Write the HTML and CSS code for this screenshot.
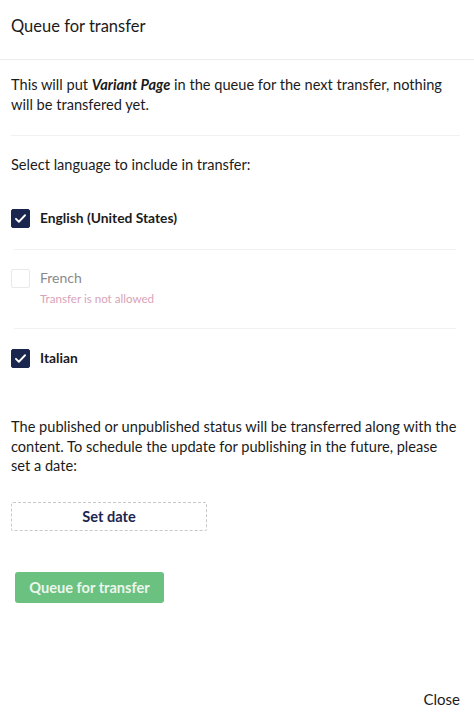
FILE: index.html
```html
<!DOCTYPE html>
<html lang="en">
<head>
<meta charset="utf-8">
<title>Queue for transfer</title>
<link rel="stylesheet" href="styles.css">
</head>
<body>
<div class="dialog">
  <header class="dialog-header">
    <h1 class="dialog-title">Queue for transfer</h1>
  </header>
  <div class="dialog-body">
    <p class="intro">This will put <strong><em>Variant Page</em></strong> in the queue for the next transfer, nothing will be transfered yet.</p>
    <p class="select-label">Select language to include in transfer:</p>
    <ul class="languages">
      <li class="lang-row">
        <span class="checkbox checked">
          <svg viewBox="0 0 20 20" width="13" height="13"><path d="M3 10.5l4.5 4.5L17 5" fill="none" stroke="#fff" stroke-width="2.8" stroke-linecap="round" stroke-linejoin="round"/></svg>
        </span>
        <div class="lang-text"><span class="lang-name">English (United States)</span></div>
      </li>
      <li class="lang-row disabled">
        <span class="checkbox"></span>
        <div class="lang-text">
          <span class="lang-name">French</span>
          <span class="lang-note">Transfer is not allowed</span>
        </div>
      </li>
      <li class="lang-row last">
        <span class="checkbox checked">
          <svg viewBox="0 0 20 20" width="13" height="13"><path d="M3 10.5l4.5 4.5L17 5" fill="none" stroke="#fff" stroke-width="2.8" stroke-linecap="round" stroke-linejoin="round"/></svg>
        </span>
        <div class="lang-text"><span class="lang-name">Italian</span></div>
      </li>
    </ul>
    <p class="status-text">The published or unpublished status will be transferred along with the content. To schedule the update for publishing in the future, please set a date:</p>
    <button class="set-date" type="button">Set date</button>
    <button class="queue-btn" type="button">Queue for transfer</button>
  </div>
  <footer class="dialog-footer">
    <button class="close-btn" type="button">Close</button>
  </footer>
</div>
</body>
</html>
```

FILE: styles.css
```css
html, body {
  margin: 0;
  padding: 0;
  background: #ffffff;
}

body {
  font-family: Lato, "Open Sans", "Liberation Sans", sans-serif;
  color: #1b1b1b;
  width: 474px;
  height: 714px;
  overflow: hidden;
}

.dialog {
  display: flex;
  flex-direction: column;
  height: 714px;
}

.dialog-header {
  height: 60px;
  border-bottom: 1px solid #ececee;
  display: flex;
  align-items: center;
  padding: 0 11px 8px;
  box-sizing: border-box;
}

.dialog-title {
  margin: 0;
  font-size: 16.5px;
  font-weight: 400;
  color: #1b1b1b;
}

.dialog-body {
  flex: 1;
  padding: 0 11px;
  font-size: 14.6px;
  line-height: 20px;
}

.intro {
  margin: 15px 3px 0 0;
  padding-bottom: 20px;
  border-bottom: 1px solid #f1f1f3;
}

.intro strong {
  font-weight: 700;
}

.select-label {
  margin: 19px 0 0;
}

.languages {
  list-style: none;
  margin: 15px 0 0;
  padding: 0;
}

.lang-row {
  display: flex;
  align-items: flex-start;
  gap: 10px;
  padding: 19px 0 21px;
  border-bottom: 1px solid #f1f1f3;
  margin-left: 3px;
  margin-right: 7px;
}

.lang-row .checkbox {
  margin-left: -3px;
}

.lang-row.last {
  border-bottom: none;
  padding-top: 20px;
}

.checkbox {
  width: 19px;
  height: 19px;
  border-radius: 2px;
  border: 1px solid #e9e9eb;
  box-sizing: border-box;
  display: flex;
  align-items: center;
  justify-content: center;
  flex: none;
  background: #fff;
}

.checkbox.checked {
  background: #1b264f;
  border-color: #1b264f;
}

.lang-text {
  display: flex;
  flex-direction: column;
}

.lang-name {
  font-weight: 700;
  font-size: 13.8px;
  line-height: 18px;
  color: #1b1b1b;
}

.disabled .lang-name {
  font-weight: 400;
  font-size: 14px;
  color: #8a8a8a;
}

.lang-note {
  font-size: 11.6px;
  line-height: 16px;
  margin-top: 4px;
  color: #d9a3b8;
}

.status-text {
  margin: 28px 5px 0 0;
  line-height: 19.5px;
}

.set-date {
  display: block;
  margin-top: 26px;
  width: 196px;
  height: 29px;
  border: 1px dashed #c8c8cc;
  border-radius: 2px;
  background: #fff;
  font-family: inherit;
  font-size: 14.6px;
  font-weight: 700;
  color: #1b264f;
  padding: 0;
  cursor: pointer;
}

.queue-btn {
  display: block;
  margin-top: 41px;
  margin-left: 4px;
  width: 149px;
  height: 31px;
  border: none;
  border-radius: 3px;
  background: #6bc17f;
  color: #eaf6ed;
  font-family: inherit;
  font-size: 14.6px;
  font-weight: 700;
  padding: 0;
}

.dialog-footer {
  display: flex;
  justify-content: flex-end;
  padding: 0 14px 5px;
}

.close-btn {
  border: none;
  background: none;
  font-family: inherit;
  font-size: 15px;
  color: #1b1b1b;
  padding: 0;
  line-height: 20px;
}
```
